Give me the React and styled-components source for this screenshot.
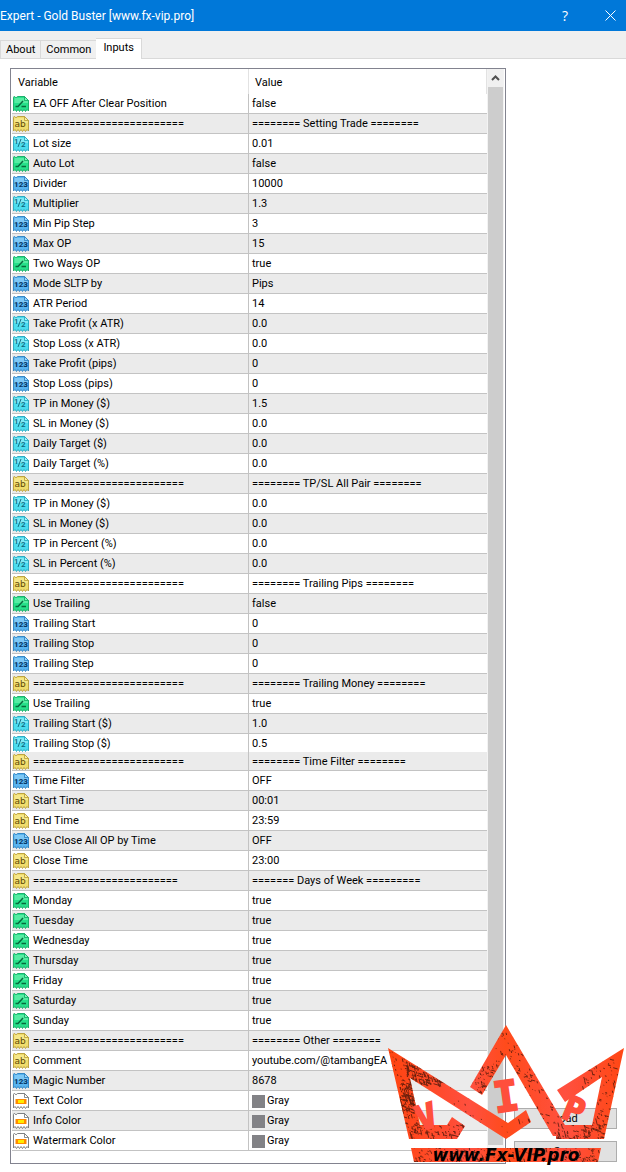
import React from "react";
import styled, { createGlobalStyle } from "styled-components";

const GlobalStyle = createGlobalStyle`
  * { box-sizing: border-box; }
  body { margin: 0; background: #fff; color: #000; font: 11px/18px Roboto, "Liberation Sans", sans-serif; }
  button { font: inherit; color: inherit; border: 0; padding: 0; background: none; }
`;

const TitleBar = styled.header`
  display: flex;
  align-items: center;
  height: 31px;
  background: #0078d9;
  color: #fff;
`;
const Title = styled.h1`
  flex: 1;
  margin: 0;
  font-size: 12px;
  font-weight: 400;
  white-space: nowrap;
`;
const WindowButton = styled.button`
  display: flex;
  align-items: center;
  justify-content: center;
  width: ${(p) => (p.$wide ? 60 : 31)}px;
  height: 31px;
  font: 14px/30px "Open Sans", sans-serif;
`;

const TabStrip = styled.nav`
  display: flex;
  align-items: flex-end;
  height: 28px;
  background: #efefef;
  border-bottom: 1px solid #d9d9d9;
`;
const Tab = styled.button`
  height: ${(p) => (p.$active ? 21 : 18)}px;
  margin-bottom: ${(p) => (p.$active ? -1 : 0)}px;
  padding: 0 ${(p) => (p.$active ? 7 : 5)}px ${(p) => (p.$active ? 2 : 0)}px;
  line-height: 18px;
  background: ${(p) => (p.$active ? "#fff" : "#f0f0f0")};
  border: 1px solid #d9d9d9;
  border-bottom: 0;
  border-left-width: ${(p) => (p.$active ? 0 : 1)}px;
  border-right-width: ${(p) => (p.$active ? 1 : 0)}px;
`;

const Body = styled.main`
  position: relative;
  display: flex;
  gap: 8px;
  padding: 9px 9px 8px 10px;
`;
const Panel = styled.section`
  flex: 1;
  display: flex;
  padding: 0 1px 0 1px;
  border: 1px solid #82838f;
`;
const Grid = styled.table`
  flex: 1;
  align-self: flex-start;
  margin-bottom: 12px;
  border-spacing: 0;
  table-layout: fixed;
  width: 100%;
`;
const NameCol = styled.col`
  width: 237px;
`;
const HeadCell = styled.th`
  height: 25px;
  padding: 2px 6px 0;
  font-weight: 400;
  text-align: left;
  border-right: 1px solid #e2e2e2;
`;
const Row = styled.tr`
  background: ${(p) => (p.$shaded ? "#ebebeb" : "#fff")};
`;
const Cell = styled.td`
  height: ${(p) => p.$height}px;
  padding: 0 0 0 ${(p) => (p.$value ? 3 : 1)}px;
  line-height: 16px;
  vertical-align: top;
  white-space: nowrap;
  border-bottom: ${(p) => (p.$joined ? 0 : 1)}px solid #c3c3c3;
  border-right: ${(p) => (p.$value ? 0 : 1)}px solid #c3c3c3;
`;
const CellContent = styled.div`
  display: flex;
  align-items: center;
  height: 18px;
  padding-top: 2px;
  gap: ${(p) => p.$gap || 0}px;
`;
const Swatch = styled.span`
  width: 13px;
  height: 13px;
  background: #828286;
`;
const ScrollBar = styled.div`
  display: flex;
  flex-direction: column;
  width: 17px;
  padding: 0 1px;
  background: #f3f3f3;
`;
const ScrollUp = styled.button`
  display: flex;
  align-items: center;
  justify-content: center;
  height: 18px;
  background: #f0f0f0;
`;
const ScrollThumb = styled.div`
  flex: 1;
  margin-bottom: 18px;
  background: #cdcdcd;
`;
const Side = styled.aside`
  display: flex;
  flex-direction: column;
  justify-content: flex-end;
  gap: 12px;
  width: 103px;
  padding-bottom: 2px;
`;
const ActionButton = styled.button`
  height: 21px;
  line-height: 19px;
  background: #e1e1e1;
  border: 1px solid #adadad;
`;
const Logo = styled.svg`
  position: absolute;
  right: 2px;
  bottom: 7px;
`;

const ICONS = {
  bool: { fill: "#27e08a", light: "#7ff5b8", edge: "#12a862" },
  text: { fill: "#f0dc6c", light: "#fbf0a0", edge: "#b79c35", ink: "#5d4a08" },
  double: { fill: "#4cdcee", light: "#a5f3fb", edge: "#22a5bd", ink: "#0b6478" },
  int: { fill: "#58b4f0", light: "#9ed8fb", edge: "#2b80c0", ink: "#06335f" },
  color: { fill: "#ffffff", light: "#ffffff", edge: "#6f7276" },
};

function TypeIcon({ type }) {
  const c = ICONS[type];
  return (
    <svg width="16" height="16" viewBox="0 0 16 16" aria-hidden="true">
      <path
        d="M.5 1.5Q.5.5 1.5.5 2 1.5 3 1.5T4.500.5H11.5L15.5 4.500V15L14 13.500 12.5 15.500 11 13.500 9.5 15.500 8 13.500 6.500 15.500 5 13.500 3.500 15.500 2 13.500.5 15Z"
        fill={c.fill}
        stroke={c.edge}
        strokeWidth=".9"
      />
      <path d="M2 2H11V5H15V7H1.500V2Z" fill={c.light} opacity=".55" />
      <path d="M11.500.5V4.500H15.500Z" fill={c.light} stroke={c.edge} strokeWidth=".8" />
      {type === "bool" && <path d="M2.500 10.500H5L10 5M8.500 10.500H13" fill="none" stroke="#08693c" strokeWidth="1.5" />}
      {type === "color" && (
        <>
          <rect x="2.500" y="6" width="11" height="5" fill="#ff8a00" />
          <rect x="5" y="7" width="6" height="3" fill="#ffec00" />
        </>
      )}
      {type === "text" && (
        <text x="7" y="11" textAnchor="middle" fontFamily="DejaVu Sans, sans-serif" fontSize="9" fill={c.ink}>ab</text>
      )}
      {type === "int" && (
        <text x="8" y="11" textAnchor="middle" fontFamily="Roboto, sans-serif" fontSize="8" fontWeight="700" fill={c.ink}>123</text>
      )}
      {type === "double" && (
        <g fill={c.ink} fontFamily="Roboto, sans-serif" fontSize="8" fontWeight="500">
          <text x="1" y="8">1</text>
          <path d="M5 11L8 3" stroke={c.ink} strokeWidth=".9" />
          <text x="8" y="11">2</text>
        </g>
      )}
    </svg>
  );
}

const LINE = "=".repeat(25);
const section = (title) => ["text", LINE, `======== ${title} ========`];

const INPUTS = [
  ["bool", "EA OFF After Clear Position", "false"],
  section("Setting Trade"),
  ["double", "Lot size", "0.01"],
  ["bool", "Auto Lot", "false"],
  ["int", "Divider", "10000"],
  ["double", "Multiplier", "1.3"],
  ["int", "Min Pip Step", "3"],
  ["int", "Max OP", "15"],
  ["bool", "Two Ways OP", "true"],
  ["int", "Mode SLTP by", "Pips"],
  ["int", "ATR Period", "14"],
  ["double", "Take Profit (x ATR)", "0.0"],
  ["double", "Stop Loss (x ATR)", "0.0"],
  ["int", "Take Profit (pips)", "0"],
  ["int", "Stop Loss (pips)", "0"],
  ["double", "TP in Money ($)", "1.5"],
  ["double", "SL in Money ($)", "0.0"],
  ["double", "Daily Target ($)", "0.0"],
  ["double", "Daily Target (%)", "0.0"],
  section("TP/SL All Pair"),
  ["double", "TP in Money ($)", "0.0"],
  ["double", "SL in Money ($)", "0.0"],
  ["double", "TP in Percent (%)", "0.0"],
  ["double", "SL in Percent (%)", "0.0"],
  section("Trailing Pips"),
  ["bool", "Use Trailing", "false"],
  ["int", "Trailing Start", "0"],
  ["int", "Trailing Stop", "0"],
  ["int", "Trailing Step", "0"],
  section("Trailing Money"),
  ["bool", "Use Trailing", "true"],
  ["double", "Trailing Start ($)", "1.0"],
  ["double", "Trailing Stop ($)", "0.5", { height: 18, joined: true }],
  [...section("Time Filter"), { height: 19 }],
  ["int", "Time Filter", "OFF"],
  ["text", "Start Time", "00:01"],
  ["text", "End Time", "23:59"],
  ["int", "Use Close All OP by Time", "OFF"],
  ["text", "Close Time", "23:00"],
  ["text", "=".repeat(24), "======= Days of Week ========="],
  ["bool", "Monday", "true"],
  ["bool", "Tuesday", "true"],
  ["bool", "Wednesday", "true"],
  ["bool", "Thursday", "true"],
  ["bool", "Friday", "true"],
  ["bool", "Saturday", "true"],
  ["bool", "Sunday", "true"],
  section("Other"),
  ["text", "Comment", "youtube.com/@tambangEA"],
  ["int", "Magic Number", "8678"],
  ["color", "Text Color", "Gray"],
  ["color", "Info Color", "Gray"],
  ["color", "Watermark Color", "Gray"],
];

function InputRow({ type, name, value, shaded, height = 20, joined }) {
  return (
    <Row $shaded={shaded}>
      <Cell $height={height} $joined={joined}>
        <CellContent $gap={4}>
          <TypeIcon type={type} />
          {name}
        </CellContent>
      </Cell>
      <Cell $height={height} $joined={joined} $value>
        <CellContent $gap={2}>
          {type === "color" && <Swatch />}
          {value}
        </CellContent>
      </Cell>
    </Row>
  );
}

// Scratches are spread over each patch [x, y, width, height, count, longest].
const PATCHES = [
  [2, 28, 34, 82, 170, 5],
  [18, 36, 34, 24, 150, 9],
  [12, 58, 20, 28, 130, 10],
  [20, 98, 60, 16, 70, 9],
  [60, 52, 60, 60, 45, 3],
  [82, 40, 30, 32, 100, 4],
  [100, 4, 44, 56, 90, 4],
  [130, 44, 40, 70, 80, 8],
  [168, 98, 48, 16, 70, 8],
  [194, 34, 40, 80, 130, 7],
  [22, 123, 190, 16, 230, 5],
];
function scratches() {
  let seed = 7;
  const rnd = () => (seed = (seed * 16807) % 2147483647) / 2147483647;
  let d = "";
  for (const [x, y, w, h, n, len] of PATCHES) {
    for (let i = 0; i < n; i++) {
      const px = x + rnd() * w;
      const py = y + rnd() * h;
      const flat = rnd() > 0.6;
      const l = 0.5 + rnd() * rnd() * len;
      const dx = flat ? l : l * 0.25;
      const dy = flat ? l * 0.3 : l;
      d += `M${px.toFixed(1)} ${py.toFixed(1)}l${dx.toFixed(1)} ${dy.toFixed(1)}`;
    }
  }
  return d;
}
const SCRATCHES = scratches();
const CROWN =
  "M0 24L120 99 138 86 143 98 118 115 22 54 32 101H59L64 93 77 102 69 115H21Z" +
  "M118 1L177 101H204L214 53 177 78 169 66 236 24 216 115H168V112H165L118 31 94 71 82 63Z";
const BANNER = "M23 124H213L210 138H26Z";

function CrownLogo() {
  return (
    <Logo width="236" height="141" viewBox="0 0 236 141" role="img" aria-label="www.Fx-VIP.pro">
      <defs>
        <linearGradient id="paint">
          <stop offset="0" stopColor="#ff4510" />
          <stop offset=".35" stopColor="#ff5040" />
          <stop offset=".5" stopColor="#ff4c1c" />
          <stop offset=".75" stopColor="#ff5040" />
          <stop offset="1" stopColor="#ff4814" />
        </linearGradient>
        <clipPath id="shape">
          <path d={CROWN + BANNER} />
        </clipPath>
      </defs>
      <path d={CROWN + BANNER} fill="url(#paint)" />
      <path d={SCRATCHES} clipPath="url(#shape)" stroke="#3d1408" strokeWidth=".9" opacity=".8" />
      <g fill="#ff4f3c" stroke="#ff4f3c" strokeWidth="2" fontFamily="DejaVu Sans Mono, monospace" fontWeight="700">
        <text transform="translate(42 104) rotate(-18)" fontSize="34" textAnchor="middle">V</text>
        <text transform="translate(120 87) rotate(-8)" fontSize="42" textAnchor="middle">I</text>
        <text transform="translate(172 93) rotate(22)" fontSize="34">P</text>
      </g>
      <text x="118" y="137" textAnchor="middle" fontFamily="DejaVu Sans, sans-serif" fontSize="17" fontWeight="700" fontStyle="italic">www.Fx-VIP.pro</text>
    </Logo>
  );
}

export default function App() {
  return (
    <>
      <GlobalStyle />
      <TitleBar>
        <Title>Expert - Gold Buster [www.fx-vip.pro]</Title>
        <WindowButton $wide aria-label="Help">?</WindowButton>
        <WindowButton aria-label="Close">
          <svg width="11" height="11" viewBox="0 0 11 11" stroke="#fff">
            <path d="M.5.5L10.5 10.5M10.5.5L.5 10.5" />
          </svg>
        </WindowButton>
      </TitleBar>
      <TabStrip>
        <Tab>About</Tab>
        <Tab>Common</Tab>
        <Tab $active>Inputs</Tab>
      </TabStrip>
      <Body>
        <Panel>
          <Grid>
            <colgroup>
              <NameCol />
              <col />
            </colgroup>
            <thead>
              <tr>
                <HeadCell>Variable</HeadCell>
                <HeadCell>Value</HeadCell>
              </tr>
            </thead>
            <tbody>
              {INPUTS.map(([type, name, value, options], i) => (
                <InputRow key={i} type={type} name={name} value={value} shaded={i % 2 === 1} {...options} />
              ))}
            </tbody>
          </Grid>
          <ScrollBar>
            <ScrollUp aria-label="Scroll up">
              <svg width="9" height="6" viewBox="0 0 9 6" fill="none" stroke="#505050" strokeWidth="2">
                <path d="M1 5L4.5 1.5 8 5" />
              </svg>
            </ScrollUp>
            <ScrollThumb />
          </ScrollBar>
        </Panel>
        <Side>
          <ActionButton>Load</ActionButton>
          <ActionButton>Save</ActionButton>
        </Side>
        <CrownLogo />
      </Body>
    </>
  );
}
